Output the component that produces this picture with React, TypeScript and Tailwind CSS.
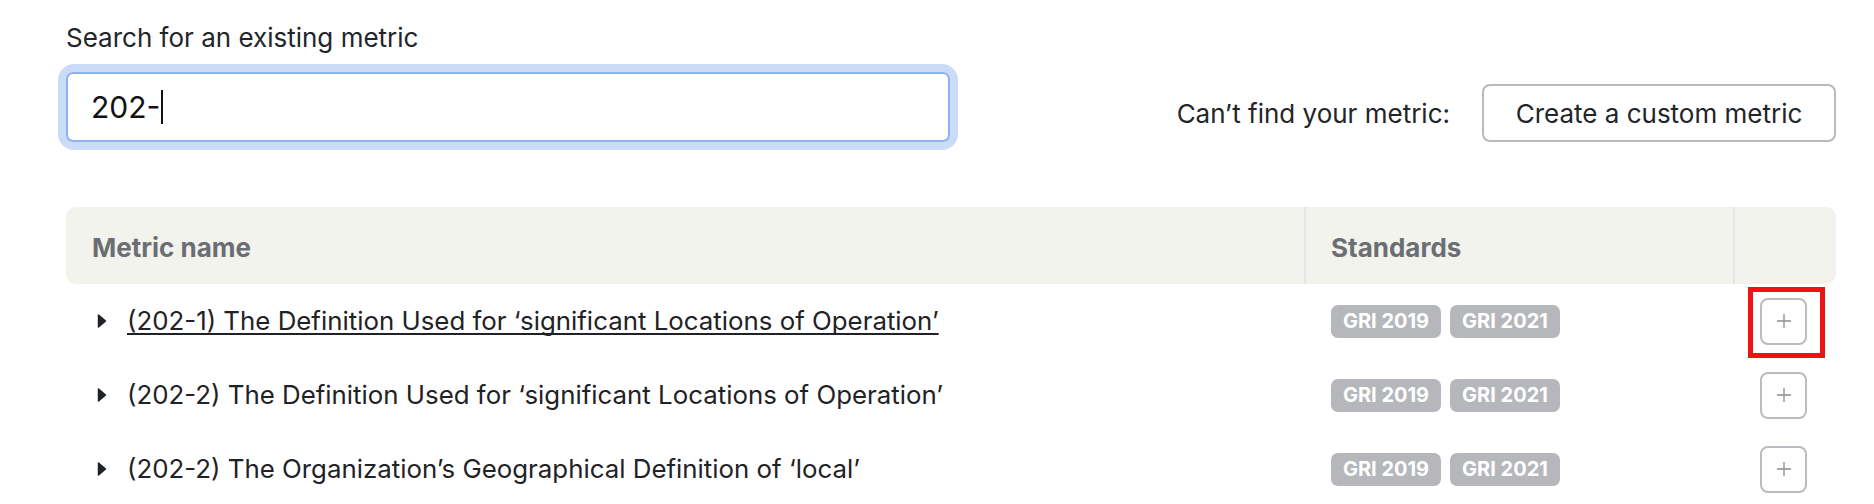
import React from "react";

const rows = [
  { name: "(202-1) The Definition Used for \u2018significant Locations of Operation\u2019", underline: true, highlight: true },
  { name: "(202-2) The Definition Used for \u2018significant Locations of Operation\u2019", underline: false, highlight: false },
  { name: "(202-2) The Organization\u2019s Geographical Definition of \u2018local\u2019", underline: false, highlight: false },
];

function Plus() {
  return (
    <svg width="16" height="16" viewBox="0 0 16 16" fill="none">
      <path d="M8 1v14M1 8h14" stroke="#8a8d91" strokeWidth="1.3" />
    </svg>
  );
}

export default function App() {
  return (
    <div className="w-[1874px] h-[504px] bg-white font-['Inter','Noto_Sans',sans-serif] text-[#1f2226] pl-[66px] pr-[38px] pt-[22px] overflow-hidden">
      <div className="flex items-end justify-between">
        <div className="flex flex-col">
          <div className="text-[26px] leading-[31px] text-[#222529]">Search for an existing metric</div>
          <div className="mt-[19px] rounded-[8px] ring-[8px] ring-[#cbdcf8]">
            <div className="w-[884px] h-[70px] rounded-[7px] border-2 border-[#8db2ef] bg-white flex items-center pl-[23px]">
              <span className="text-[30px] leading-none text-[#111]">202-</span>
              <span className="w-[2px] h-[34px] bg-[#111] ml-[1px]" />
            </div>
          </div>
        </div>
        <div className="flex items-center gap-[32px]">
          <span className="text-[26px] text-[#222529]">Can&rsquo;t find your metric:</span>
          <button className="h-[58px] w-[354px] rounded-[8px] border-2 border-[#b7babe] bg-white text-[26px] text-[#222529]">
            Create a custom metric
          </button>
        </div>
      </div>

      <div className="mt-[65px]">
        <div className="flex h-[77px] rounded-[10px] bg-[#f3f3ee] text-[26px] font-bold text-[#6b6e72]">
          <div className="w-[1240px] flex items-center pl-[26px] pt-[3px] border-r-2 border-[#e3e5ea]">Metric name</div>
          <div className="w-[429px] flex items-center pl-[25px] pt-[3px] border-r-2 border-[#e3e5ea]">Standards</div>
          <div className="flex-1" />
        </div>
        {rows.map((r, i) => (
          <div key={i} className="flex h-[74px] items-center">
            <div className="w-[1240px] flex items-center pl-[31px]">
              <svg width="10" height="16" viewBox="0 0 10 16" className="mr-[20px]">
                <path d="M1.5 2 L8.5 8 L1.5 14 Z" fill="#1f2226" stroke="#1f2226" strokeWidth="1.5" strokeLinejoin="round" />
              </svg>
              <span className={"text-[25.85px] text-[#1f2226] " + (r.underline ? "underline underline-offset-[3px] decoration-[2px] [text-decoration-skip-ink:none]" : "")}>
                {r.name}
              </span>
            </div>
            <div className="w-[429px] flex items-center gap-[9px] pl-[25px]">
              <span className="h-[33px] w-[110px] rounded-[7px] bg-[#b5b7bb] text-white text-[20px] font-bold flex items-center justify-center">GRI 2019</span>
              <span className="h-[33px] w-[110px] rounded-[7px] bg-[#b5b7bb] text-white text-[20px] font-bold flex items-center justify-center">GRI 2021</span>
            </div>
            <div className="flex-1 flex items-center pl-[25px]">
              <div className="relative">
                <button className="w-[47px] h-[47px] rounded-[8px] border-2 border-[#b9bcc0] bg-white flex items-center justify-center">
                  <Plus />
                </button>
                {r.highlight && (
                  <div className="absolute left-[-12px] right-[-18px] top-[-11px] bottom-[-13px] border-[5px] border-[#ee1212] pointer-events-none" />
                )}
              </div>
            </div>
          </div>
        ))}
      </div>
    </div>
  );
}
